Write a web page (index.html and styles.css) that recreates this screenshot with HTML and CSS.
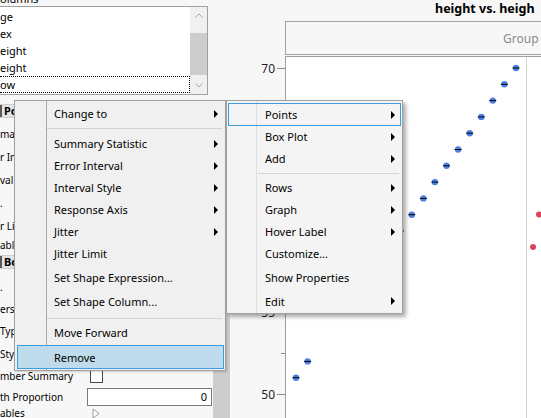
FILE: index.html
```html
<!DOCTYPE html>
<html lang="en">
<head>
<meta charset="utf-8">
<title>height vs. height</title>
<link rel="stylesheet" href="styles.css">
</head>
<body>
<div class="app">
  <aside class="side">
    <div class="side-content">
      <div class="cap"><span>olumns</span></div>
      <div class="listbox">
        <ul class="list-items">
          <li>ge</li>
          <li>ex</li>
          <li>eight</li>
          <li>eight</li>
          <li class="focus">ow</li>
        </ul>
        <div class="vscroll">
          <div class="sbtn"><svg width="8" height="5" viewBox="0 0 8 5"><polyline points="0.5,4.5 4,1 7.5,4.5" fill="none" stroke="#a6a6a6" stroke-width="1"/></svg></div>
          <div class="sthumb"></div>
          <div class="sbtn"><svg width="8" height="5" viewBox="0 0 8 5"><polyline points="0.5,0.5 4,4 7.5,0.5" fill="none" stroke="#a6a6a6" stroke-width="1"/></svg></div>
        </div>
      </div>

      <section class="sect">
        <div class="hdr"><span class="disc"></span>Po</div>
        <div class="rows">
          <div class="row">ma</div>
          <div class="row">r In</div>
          <div class="row">val</div>
          <div class="row">.</div>
          <div class="row">r Li</div>
          <div class="row h16">able</div>
        </div>
      </section>

      <section class="sect sect2">
        <div class="hdr"><span class="disc"></span>Bo</div>
        <div class="rows pt6">
          <div class="row">.</div>
          <div class="row h22">ers</div>
          <div class="row h22">Typ</div>
          <div class="row">Styl</div>
          <div class="row h22"><span class="lbl">mber Summary</span><span class="chk"></span></div>
          <div class="row h19"><span class="lbl">th Proportion</span><span class="txt">0</span></div>
          <div class="row h14"><span class="lbl">ables</span><svg class="tri" width="8" height="11" viewBox="0 0 8 11"><polygon points="1,1 7,5.5 1,10" fill="#fff" stroke="#9a9a9a" stroke-width="1"/></svg></div>
        </div>
      </section>
    </div>
    <div class="side-scroll"><div class="thumb"></div></div>
  </aside>

  <main class="report">
    <div class="title">height vs. heigh</div>
    <div class="group-hdr">Group</div>
    <div class="plot">
      <svg width="311" height="362" viewBox="0 0 311 362">
        <rect x="55" y="0" width="256" height="362" fill="#fff"/>
        <line x1="55.5" y1="0" x2="55.5" y2="362" stroke="#a0a0a0"/>
        <line x1="55" y1="0.5" x2="311" y2="0.5" stroke="#a0a0a0"/>
        <line x1="296.5" y1="1" x2="296.5" y2="362" stroke="#d4d4d4"/>
        <g stroke="#8a8a8a">
          <line x1="47" y1="12.5" x2="55" y2="12.5"/>
          <line x1="51" y1="53.5" x2="55" y2="53.5"/>
          <line x1="47" y1="93.5" x2="55" y2="93.5"/>
          <line x1="51" y1="134.5" x2="55" y2="134.5"/>
          <line x1="47" y1="175.5" x2="55" y2="175.5"/>
          <line x1="51" y1="216.5" x2="55" y2="216.5"/>
          <line x1="47" y1="256.5" x2="55" y2="256.5"/>
          <line x1="51" y1="297.5" x2="55" y2="297.5"/>
          <line x1="47" y1="338.5" x2="55" y2="338.5"/>
        </g>
        <g class="ylab" text-anchor="end">
          <text x="45" y="17">70</text>
          <text x="45" y="261">55</text>
          <text x="45" y="343">50</text>
        </g>
        <g class="pts">
          <circle cx="286.0" cy="12.0" r="3.2"/><circle cx="274.4" cy="28.3" r="3.2"/>
          <circle cx="262.8" cy="44.6" r="3.2"/><circle cx="251.3" cy="60.9" r="3.2"/>
          <circle cx="239.7" cy="77.2" r="3.2"/><circle cx="228.1" cy="93.5" r="3.2"/>
          <circle cx="216.5" cy="109.8" r="3.2"/><circle cx="204.9" cy="126.1" r="3.2"/>
          <circle cx="193.4" cy="142.4" r="3.2"/><circle cx="181.8" cy="158.7" r="3.2"/>
          <circle cx="170.2" cy="175.0" r="3.2"/><circle cx="158.6" cy="191.3" r="3.2"/>
          <circle cx="147.0" cy="207.6" r="3.2"/><circle cx="135.5" cy="223.9" r="3.2"/>
          <circle cx="123.9" cy="240.2" r="3.2"/><circle cx="112.3" cy="254.5" r="3.2"/>
          <circle cx="77.6" cy="305.4" r="3.2"/><circle cx="66.0" cy="321.7" r="3.2"/>
        </g>
        <g class="dash">
          <rect x="282.5" y="11.5" width="7" height="1"/><rect x="270.9" y="27.8" width="7" height="1"/>
          <rect x="259.3" y="44.1" width="7" height="1"/><rect x="247.8" y="60.4" width="7" height="1"/>
          <rect x="236.2" y="76.7" width="7" height="1"/><rect x="224.6" y="93.0" width="7" height="1"/>
          <rect x="213.0" y="109.3" width="7" height="1"/><rect x="201.4" y="125.6" width="7" height="1"/>
          <rect x="189.9" y="141.9" width="7" height="1"/><rect x="178.3" y="158.2" width="7" height="1"/>
          <rect x="166.7" y="174.5" width="7" height="1"/><rect x="155.1" y="190.8" width="7" height="1"/>
          <rect x="143.5" y="207.1" width="7" height="1"/><rect x="132.0" y="223.4" width="7" height="1"/>
          <rect x="120.4" y="239.7" width="7" height="1"/><rect x="108.8" y="254.0" width="7" height="1"/>
          <rect x="74.1" y="304.9" width="7" height="1"/><rect x="62.5" y="321.2" width="7" height="1"/>
        </g>
        <g class="rpts">
          <circle cx="309" cy="158.5" r="3"/>
          <circle cx="303" cy="191" r="3"/>
        </g>
      </svg>
    </div>
  </main>
</div>

<nav class="menu menu-main">
  <div class="mi sub">Change to</div>
  <div class="sep"></div>
  <div class="mi sub">Summary Statistic</div>
  <div class="mi sub">Error Interval</div>
  <div class="mi sub">Interval Style</div>
  <div class="mi sub">Response Axis</div>
  <div class="mi sub">Jitter</div>
  <div class="mi">Jitter Limit</div>
  <div class="mi h24">Set Shape Expression...</div>
  <div class="mi h24">Set Shape Column...</div>
  <div class="sep s9"></div>
  <div class="mi">Move Forward</div>
  <div class="mi h24 sel">Remove</div>
</nav>

<nav class="menu menu-sub">
  <div class="mi sub focus">Points</div>
  <div class="mi sub">Box Plot</div>
  <div class="mi sub">Add</div>
  <div class="sep s7"></div>
  <div class="mi sub">Rows</div>
  <div class="mi sub">Graph</div>
  <div class="mi sub">Hover Label</div>
  <div class="mi">Customize...</div>
  <div class="mi h24">Show Properties</div>
  <div class="mi h24 sub">Edit</div>
</nav>
</body>
</html>
```
FILE: styles.css
```css
html, body {
  margin: 0;
  padding: 0;
}
body {
  width: 541px;
  height: 418px;
  overflow: hidden;
  position: relative;
  background: #f7f7f7;
  font-family: "Noto Sans", "DejaVu Sans", sans-serif;
  color: #000;
}
.app {
  display: flex;
  height: 418px;
}

/* ---------- left panel ---------- */
.side {
  width: 230px;
  flex: none;
  display: flex;
}
.side-content {
  width: 213px;
  flex: none;
  overflow: hidden;
  font-size: 10px;
}
.side-scroll {
  width: 17px;
  flex: none;
}
.side-scroll .thumb {
  margin-top: 200px;
  height: 218px;
  background: #cdcdcd;
}
.cap {
  height: 6px;
  overflow: hidden;
  display: flex;
  align-items: flex-end;
  font-size: 11px;
}
.cap span {
  display: block;
  line-height: 14px;
}
.listbox {
  box-sizing: border-box;
  width: 208px;
  height: 89px;
  border: 1px solid #a0a0a0;
  border-left: none;
  background: #fff;
  display: flex;
}
.list-items {
  list-style: none;
  margin: 0;
  padding: 1px 0 0 0;
  width: 190px;
  flex: none;
  font-size: 11px;
}
.list-items li {
  height: 17px;
  line-height: 17px;
  white-space: nowrap;
  box-sizing: border-box;
}
.list-items li.focus {
  border: 1px dotted #000;
  border-left: none;
  line-height: 15px;
}
.vscroll {
  width: 17px;
  flex: none;
  background: #f0f0f0;
  display: flex;
  flex-direction: column;
}
.sbtn {
  height: 17px;
  display: flex;
  align-items: center;
  justify-content: center;
}
.sthumb {
  margin-top: 9px;
  height: 42px;
  margin-bottom: 2px;
  background: #cdcdcd;
}
.sect {
  margin-top: 9px;
}
.sect2 {
  margin-top: 2px;
}
.hdr {
  height: 14px;
  box-sizing: border-box;
  background: #e4e4e4;
  border-top: 1px solid #cfcfcf;
  border-bottom: 1px solid #cfcfcf;
  font-weight: bold;
  font-size: 11px;
  line-height: 12px;
  display: flex;
  align-items: center;
  white-space: nowrap;
}
.disc {
  width: 2px;
  height: 12px;
  background: #5a5a5a;
  margin-right: 2px;
}
.rows {
  padding-top: 4px;
}
.rows.pt6 {
  padding-top: 6px;
}
.row {
  height: 23px;
  display: flex;
  align-items: center;
  white-space: nowrap;
}
.row.h22 { height: 22px; }
.row.h19 { height: 19px; }
.row.h16 { height: 16px; }
.row.h14 { height: 14px; }
.lbl {
  width: 87px;
  flex: none;
  overflow: hidden;
}
.chk {
  box-sizing: border-box;
  width: 13px;
  height: 13px;
  margin-left: 3px;
  border: 1px solid #4a4a4a;
  background: #fff;
}
.txt {
  box-sizing: border-box;
  width: 125px;
  height: 18px;
  border: 1px solid #7a7a7a;
  background: #fff;
  text-align: right;
  padding-right: 4px;
  font-size: 11px;
  line-height: 15px;
}
.tri {
  margin-left: 5px;
  display: block;
}

/* ---------- report ---------- */
.report {
  width: 311px;
  flex: none;
  display: flex;
  flex-direction: column;
  overflow: hidden;
}
.title {
  height: 21px;
  padding-left: 205px;
  font-weight: bold;
  font-size: 12.5px;
  line-height: 18px;
  white-space: nowrap;
  overflow: hidden;
}
.group-hdr {
  box-sizing: border-box;
  margin-left: 55px;
  height: 34px;
  border: 1px solid #a0a0a0;
  border-right: none;
  background: #f7f7f7;
  color: #8a8a8a;
  font-size: 12px;
  padding-left: 217px;
  display: flex;
  align-items: center;
  white-space: nowrap;
}
.plot {
  margin-top: 1px;
}
.plot svg {
  display: block;
}
.ylab text {
  font-family: "Noto Sans", "DejaVu Sans", sans-serif;
  font-size: 12px;
  fill: #1e1e1e;
}
.pts circle {
  fill: #4d7fe4;
}
.dash rect {
  fill: #000;
}
.rpts circle {
  fill: #d8475b;
}

/* ---------- menus ---------- */
.menu {
  position: absolute;
  box-sizing: border-box;
  border: 1px solid #a0a0a0;
  font-size: 11px;
}
.menu::before {
  content: "";
  position: absolute;
  top: 0;
  bottom: 0;
  width: 1px;
}
.menu-main {
  left: 14px;
  top: 100px;
  width: 212px;
  height: 271px;
  padding: 2px 1px 0 2px;
  background: #f0f0f0;
  box-shadow: 1px 1px 2px rgba(0, 0, 0, 0.18);
}
.menu-main::before {
  left: 31px;
  background: #a9a9a9;
}
.menu-sub {
  left: 226px;
  top: 100px;
  width: 177px;
  height: 214px;
  padding: 2px 1px 0 1px;
  background: #f4f4f4;
  box-shadow: 3px 3px 4px rgba(0, 0, 0, 0.32);
}
.menu-sub::before {
  left: 29px;
  background: #dedede;
}
.mi {
  position: relative;
  box-sizing: border-box;
  height: 22px;
  padding-left: 37px;
  padding-bottom: 1px;
  display: flex;
  align-items: center;
  white-space: nowrap;
}
.mi.h24 { height: 24px; padding-bottom: 0; }
.mi.sub::after {
  content: "";
  position: absolute;
  right: 6px;
  top: 50%;
  margin-top: -4px;
  border-left: 4px solid #000;
  border-top: 4px solid transparent;
  border-bottom: 4px solid transparent;
}
.mi.focus {
  height: 23px;
  border: 1px solid #3a9edc;
  padding-left: 36px;
  padding-bottom: 0;
}
.mi.focus::after {
  right: 5px;
}
.mi.sel {
  margin-top: 1px;
  border: 1px solid #3a9edc;
  background: #bfdcec;
  padding-left: 36px;
}
.sep {
  box-sizing: border-box;
  height: 8px;
  padding: 3px 2px 0 30px;
}
.sep::after {
  content: "";
  display: block;
  height: 1px;
  background: #d4d4d4;
}
.sep.s9 {
  height: 9px;
  padding-top: 5px;
}
.sep.s7 {
  height: 7px;
  padding-top: 3px;
}
```
